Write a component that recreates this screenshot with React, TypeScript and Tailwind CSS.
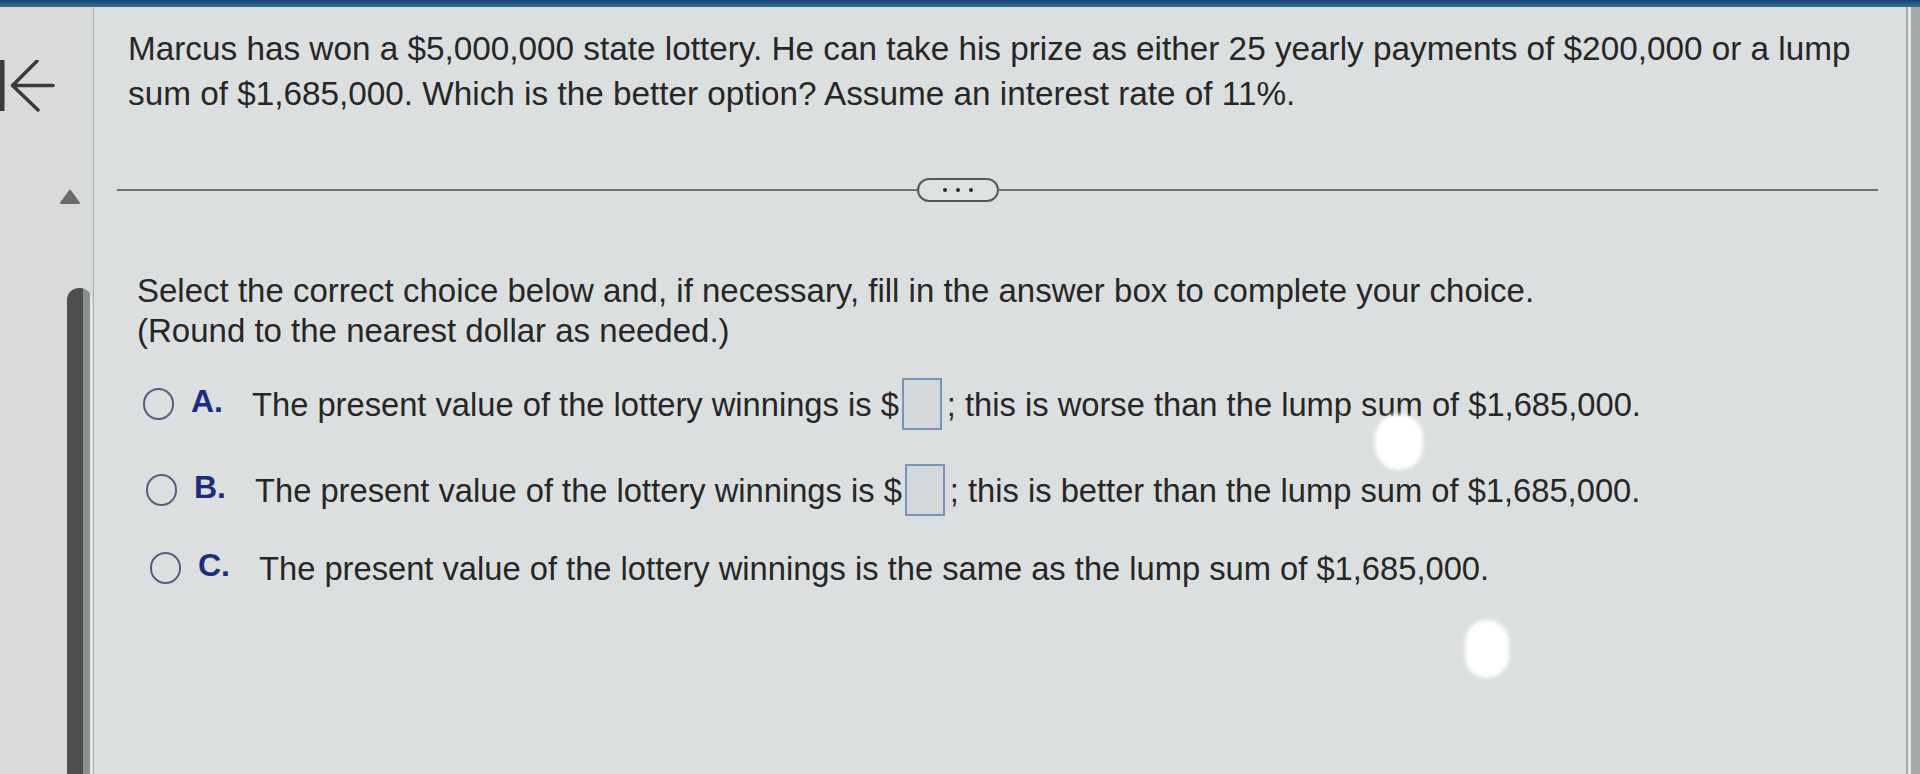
import React from "react";

const font = { fontFamily: '"Liberation Sans", Arial, Helvetica, sans-serif' };

function Radio() {
  return <div className="w-[31px] h-[32px] rounded-full border-[2.5px] border-[#50607f] shrink-0" />;
}

function Box() {
  return <div className="w-[40px] h-[52px] border-2 border-[#7892b8] bg-[#d4d8da] ml-[3px] mr-[5px] shrink-0" />;
}

function Option({ ml, letter, children }: { ml: string; letter: string; children: React.ReactNode }) {
  return (
    <div className={`flex items-center h-[52px] ${ml}`}>
      <Radio />
      <div className="w-[78px] pl-[17px] shrink-0 text-[32px] font-bold text-[#1c2c7e] leading-[41px] relative -top-[3px]">{letter}</div>
      <div className="flex items-center text-[32.7px] leading-[41px] text-[#262626] whitespace-nowrap">{children}</div>
    </div>
  );
}

export default function App() {
  return (
    <div className="w-[1920px] h-[774px] overflow-hidden relative flex flex-col bg-[#dbdede]" style={font}>
      <div className="h-[7px] w-full bg-gradient-to-b from-[#17456f] to-[#3a6f98] shrink-0" />
      <div className="flex flex-1 min-h-0">
        {/* sidebar */}
        <div className="w-[94px] shrink-0 border-r border-[#aeb2b2] bg-[#d8dbda] flex flex-col items-start">
          <svg width="56" height="52" viewBox="0 0 56 52" className="mt-[53px]">
            <rect x="0" y="0" width="4.5" height="51" fill="#3a3a3a" />
            <path d="M53 25.5 H13 M37 1 L12.5 25.5 L38 50" fill="none" stroke="#3a3a3a" strokeWidth="3.5" strokeLinecap="round" strokeLinejoin="round" />
          </svg>
          <svg width="22" height="15" viewBox="0 0 22 15" className="mt-[77px] ml-[59px]">
            <path d="M2 14 L11 1.5 L20 14 Z" fill="#6a6a6a" stroke="#6a6a6a" strokeWidth="2" strokeLinejoin="round" />
          </svg>
          <div className="mt-[84px] ml-[67px] w-[25px] flex-1 flex rounded-t-[12px] overflow-hidden">
            <div className="w-[16px] bg-[#4e4f50]" />
            <div className="w-[7px] bg-[#8e9090]" />
            <div className="w-[2px] bg-[#e8eaea]" />
          </div>
        </div>

        {/* main */}
        <div className="flex-1 pl-[23px] pr-[28px] flex flex-col bg-[#dcdfdf]">
          <div className="mt-[19px] ml-[11px] text-[33.3px] leading-[45px] text-[#262626] whitespace-nowrap">
            Marcus has won a $5,000,000 state lottery. He can take his prize as either 25 yearly payments of $200,000 or a lump
            <br />
            sum of $1,685,000. Which is the better option? Assume an interest rate of 11%.
          </div>

          <div className="mt-[62px] flex items-center h-[24px]">
            <div className="w-[801px] h-[2px] bg-[#6d7172]" />
            <div className="w-[82px] h-[24px] rounded-full border-2 border-[#555859] flex items-center justify-center gap-[9px] bg-[#dfe1e1] -mx-[1px]">
              <span className="w-[4px] h-[4px] rounded-full bg-[#2a2a2a]" />
              <span className="w-[4px] h-[4px] rounded-full bg-[#2a2a2a]" />
              <span className="w-[4px] h-[4px] rounded-full bg-[#2a2a2a]" />
            </div>
            <div className="flex-1 h-[2px] bg-[#6d7172]" />
          </div>

          <div className="mt-[69px] ml-[20px] text-[33px] leading-[40px] text-[#262626] whitespace-nowrap">
            Select the correct choice below and, if necessary, fill in the answer box to complete your choice.
            <br />
            (Round to the nearest dollar as needed.)
          </div>

          <div className="mt-[27px] flex flex-col">
            <Option ml="ml-[26px]" letter="A.">
              <span>The present value of the lottery winnings is $</span>
              <Box />
              <span>; this is worse than the lump sum of $1,685,000.</span>
            </Option>
            <div className="h-[34px]" />
            <Option ml="ml-[29px]" letter="B.">
              <span>The present value of the lottery winnings is $</span>
              <Box />
              <span>; this is better than the lump sum of $1,685,000.</span>
            </Option>
            <div className="h-[26px]" />
            <Option ml="ml-[33px]" letter="C.">
              <span>The present value of the lottery winnings is the same as the lump sum of $1,685,000.</span>
            </Option>
          </div>
        </div>

        {/* right edge */}
        <div className="w-[14px] shrink-0 border-l-2 border-[#a3a7a7] flex">
          <div className="w-[3px] bg-[#e4e6e6]" />
          <div className="flex-1 bg-[#a6aaaa]" />
        </div>
      </div>

      {/* glare spots from the photo */}
      <div className="absolute left-[1375px] top-[414px] w-[48px] h-[56px] rounded-full bg-white blur-[2px]" />
      <div className="absolute left-[1465px] top-[620px] w-[44px] h-[58px] rounded-full bg-white blur-[2px]" />
    </div>
  );
}
